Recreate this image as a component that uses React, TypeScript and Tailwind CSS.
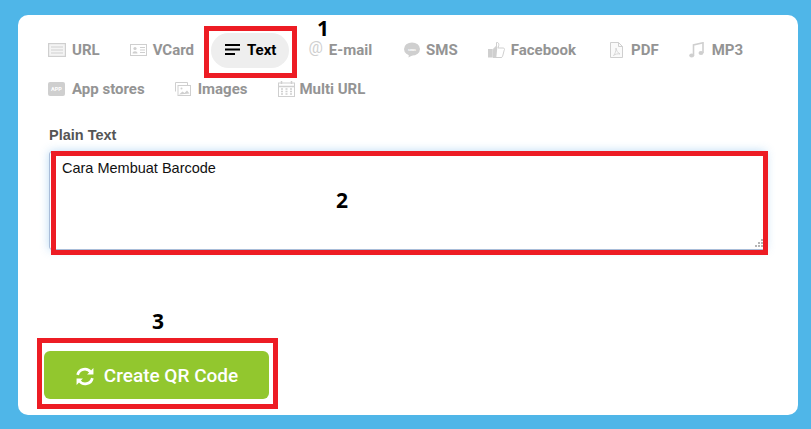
const gray = "#cfcfcf";

function UrlIcon() {
  return (
    <svg width="18" height="14" viewBox="0 0 18 14" fill="none" stroke={gray} strokeWidth="1.2">
      <rect x="0.6" y="0.6" width="16.8" height="12.8" fill="#f4f4f4" />
      <path d="M3 4h12M3 7h12M3 10h12" />
    </svg>
  );
}

function VcardIcon() {
  return (
    <svg width="17" height="12" viewBox="0 0 17 12" fill="none" stroke={gray} strokeWidth="1">
      <rect x="0.5" y="0.5" width="16" height="11" />
      <circle cx="5" cy="4.5" r="1.6" fill={gray} stroke="none" />
      <path d="M2.5 9.5c0-3 5-3 5 0z" fill={gray} stroke="none" />
      <path d="M10 3.5h5M10 6h5M10 8.5h5" />
    </svg>
  );
}

function TextIcon() {
  return (
    <svg width="15" height="11" viewBox="0 0 15 11" fill="#000">
      <rect x="0" y="0" width="15" height="2" />
      <rect x="0" y="4.5" width="15" height="2" />
      <rect x="0" y="9" width="10" height="2" />
    </svg>
  );
}

function SmsIcon() {
  return (
    <svg width="16" height="16" viewBox="0 0 16 16">
      <ellipse cx="8" cy="7" rx="8" ry="6.6" fill={gray} />
      <path d="M5 12l-.5 3.5L9 13z" fill={gray} />
      <text x="8" y="8.8" textAnchor="middle" fontSize="5" fill="#fff" fontFamily="Liberation Serif, serif">sms</text>
    </svg>
  );
}

function ThumbIcon() {
  return (
    <svg width="17" height="16" viewBox="0 0 17 16">
      <rect x="0" y="7" width="4.5" height="8.5" fill={gray} />
      <path d="M5 7.5L8.5 4V0.5c2-.4 2.6 1.4 2.2 3L10 6h5.2c1.4 0 1.6 1.4 1 2.2l-1.6 6.2c-.3.8-.8 1.1-1.6 1.1H5z" fill="#fff" stroke={gray} strokeWidth="1" />
      <path d="M5 7.5L8.5 4V1l.8 5-1 9.500H5z" fill={gray} />
    </svg>
  );
}

function PdfIcon() {
  return (
    <svg className="mr-[2px]" width="13" height="16" viewBox="0 0 13 16" fill="none" stroke={gray} strokeWidth="1">
      <path d="M.5.5h8l4 4v11H.5z" fill="#fafafa" />
      <path d="M8.500.5v4h4" />
      <path d="M6 6c.6 3 1.500 4.500 4 6-2.500-.5-4.500 0-6.500 1.500C5 12 6 9.500 6 6z" strokeWidth="0.8" />
    </svg>
  );
}

function MusicIcon() {
  return (
    <svg className="mr-[2px]" width="15" height="16" viewBox="0 0 15 16" fill="none" stroke={gray}>
      <path d="M4.500 13.500V3L14 .8V11" strokeWidth="1.6" />
      <ellipse cx="2.700" cy="13.500" rx="2.500" ry="2" fill={gray} stroke="none" />
      <ellipse cx="12" cy="11" rx="2.500" ry="2" fill={gray} stroke="none" />
    </svg>
  );
}

function AppIcon() {
  return (
    <svg className="mr-[1px]" width="17" height="14" viewBox="0 0 17 14">
      <rect width="17" height="14" rx="2" fill={gray} />
      <text x="8.500" y="9.200" textAnchor="middle" fontSize="5.500" fontWeight="700" fill="#fff" fontFamily="Roboto, sans-serif">APP</text>
    </svg>
  );
}

function ImagesIcon() {
  return (
    <svg className="mr-[1px]" width="16" height="14" viewBox="0 0 16 14" fill="none" stroke={gray} strokeWidth="1">
      <path d="M.5 9.500V.5h12V3" />
      <rect x="3" y="3.500" width="12.500" height="10" fill="#fff" />
      <circle cx="6.500" cy="6.500" r="1" fill={gray} stroke="none" />
      <path d="M4 12.500l3.500-3 2 1.500 2.500-2.500 2.500 3z" fill={gray} stroke="none" />
    </svg>
  );
}

function CalendarIcon() {
  return (
    <svg className="-mr-[2px]" width="17" height="16" viewBox="0 0 17 16" fill="none" stroke={gray} strokeWidth="1">
      <rect x="0.5" y="2" width="16" height="13.500" />
      <path d="M.5 5.500h16" strokeWidth="1.500" />
      <path d="M3.500 0v3M13.500 0v3" strokeWidth="1.500" />
      <path d="M3 8h2M7.500 8h2M12 8h2M3 10.500h2M7.500 10.500h2M12 10.500h2M3 13h2M7.500 13h2M12 13h2" strokeWidth="1.400" />
    </svg>
  );
}

function Tab({ icon, label, active, className }: { icon: React.ReactNode; label: string; active?: boolean; className?: string }) {
  return (
    <div
      className={
        (active
          ? "flex h-[35px] items-center gap-[7px] rounded-full bg-[#eeeeee] pr-[13px] pl-[14px] text-black "
          : "flex h-[35px] items-center gap-[6px] rounded-full px-[14px] text-[#949494] ") + (className ?? "")
      }
    >
      <span className="flex -translate-y-[1px] items-center">{icon}</span>
      <span>{label}</span>
    </div>
  );
}

export default function App() {
  return (
    <div className="relative h-[429px] overflow-hidden bg-[#4fb6e8] pt-[15px] pr-[13px] pl-[18px]">
      <div className="flex h-[400px] flex-col rounded-[10px] bg-white">
        <div className="flex flex-wrap gap-x-[3px] gap-y-1 pt-[18px] pl-4 font-['Roboto',sans-serif] text-[15px] font-bold">
          <Tab icon={<UrlIcon />} label="URL" className="-mr-[1px]" />
          <Tab icon={<VcardIcon />} label="VCard" />
          <Tab icon={<TextIcon />} label="Text" active />
          <Tab
            icon={<span className="-translate-y-[2px] text-[16px] font-normal leading-none text-[#cfcfcf]">@</span>}
            label="E-mail"
            className="ml-[2px]"
          />
          <Tab icon={<SmsIcon />} label="SMS" className="ml-[1px]" />
          <Tab icon={<ThumbIcon />} label="Facebook" className="-ml-[1px]" />
          <Tab icon={<PdfIcon />} label="PDF" className="ml-[3px]" />
          <Tab icon={<MusicIcon />} label="MP3" className="-ml-[1px]" />
          <Tab icon={<AppIcon />} label="App stores" className="-mr-[1px]" />
          <Tab icon={<ImagesIcon />} label="Images" />
          <Tab icon={<CalendarIcon />} label="Multi URL" />
        </div>

        <div className="mt-[20px] pr-[32px] pl-[31px]">
          <label className="block font-['Liberation_Sans',sans-serif] text-[14.500px] font-bold leading-[16px] text-[#555555]">
            Plain Text
          </label>
          <div className="relative mt-[8px]">
            <textarea
              defaultValue="Cara Membuat Barcode"
              className="block h-[99px] w-full resize-none rounded-[3px] border border-[#a8bcd8] px-[12px] py-[6px] font-['Liberation_Sans',sans-serif] text-[14.500px] leading-[20px] text-[#111111] shadow-[0_0_10px_rgba(102,175,233,0.45)] outline-none"
            />
            {/* resize grip */}
            <svg className="absolute right-[3px] bottom-[3px]" width="8" height="8" viewBox="0 0 8 8" fill="#b5b5b5">
              <rect x="6" y="0" width="2" height="2" />
              <rect x="3" y="3" width="2" height="2" />
              <rect x="6" y="3" width="2" height="2" />
              <rect x="0" y="6" width="2" height="2" />
              <rect x="3" y="6" width="2" height="2" />
              <rect x="6" y="6" width="2" height="2" />
            </svg>
          </div>
        </div>

        <div className="mt-auto pb-[16px] pl-[26px]">
          <button className="flex h-[48px] w-[225px] items-center justify-center gap-[9px] rounded-[6px] bg-[#92c72e] pt-[2px] font-['Roboto',sans-serif] text-[19px] font-medium text-white">
            <svg width="20" height="19" viewBox="0 0 19 18" fill="none" stroke="#ffffff" strokeWidth="2.600">
              <path d="M2.500 7.500A7 7 0 0 1 15 5" />
              <path d="M16.500 10.500A7 7 0 0 1 4 13" />
              <path d="M17.500 1v6h-6z" fill="#ffffff" stroke="none" />
              <path d="M1.500 17v-6h6z" fill="#ffffff" stroke="none" />
            </svg>
            Create QR Code
          </button>
        </div>
      </div>

      {/* red annotations drawn over the screenshot */}
      <div className="absolute top-[26px] left-[204px] h-[52px] w-[93px] border-[5px] border-[#ed1c24]" />
      <div className="absolute top-[151px] left-[51px] h-[104px] w-[717px] border-[5px] border-[#ed1c24]" />
      <div className="absolute top-[338px] left-[37px] h-[71px] w-[241px] border-[5px] border-[#ed1c24]" />
      <span className="absolute top-[14px] left-[317px] font-['Open_Sans',sans-serif] text-[21px] font-bold leading-[29px] text-black">1</span>
      <span className="absolute top-[186px] left-[336px] font-['Open_Sans',sans-serif] text-[21px] font-bold leading-[29px] text-black">2</span>
      <span className="absolute top-[307px] left-[152px] font-['Open_Sans',sans-serif] text-[21px] font-bold leading-[29px] text-black">3</span>
    </div>
  );
}
